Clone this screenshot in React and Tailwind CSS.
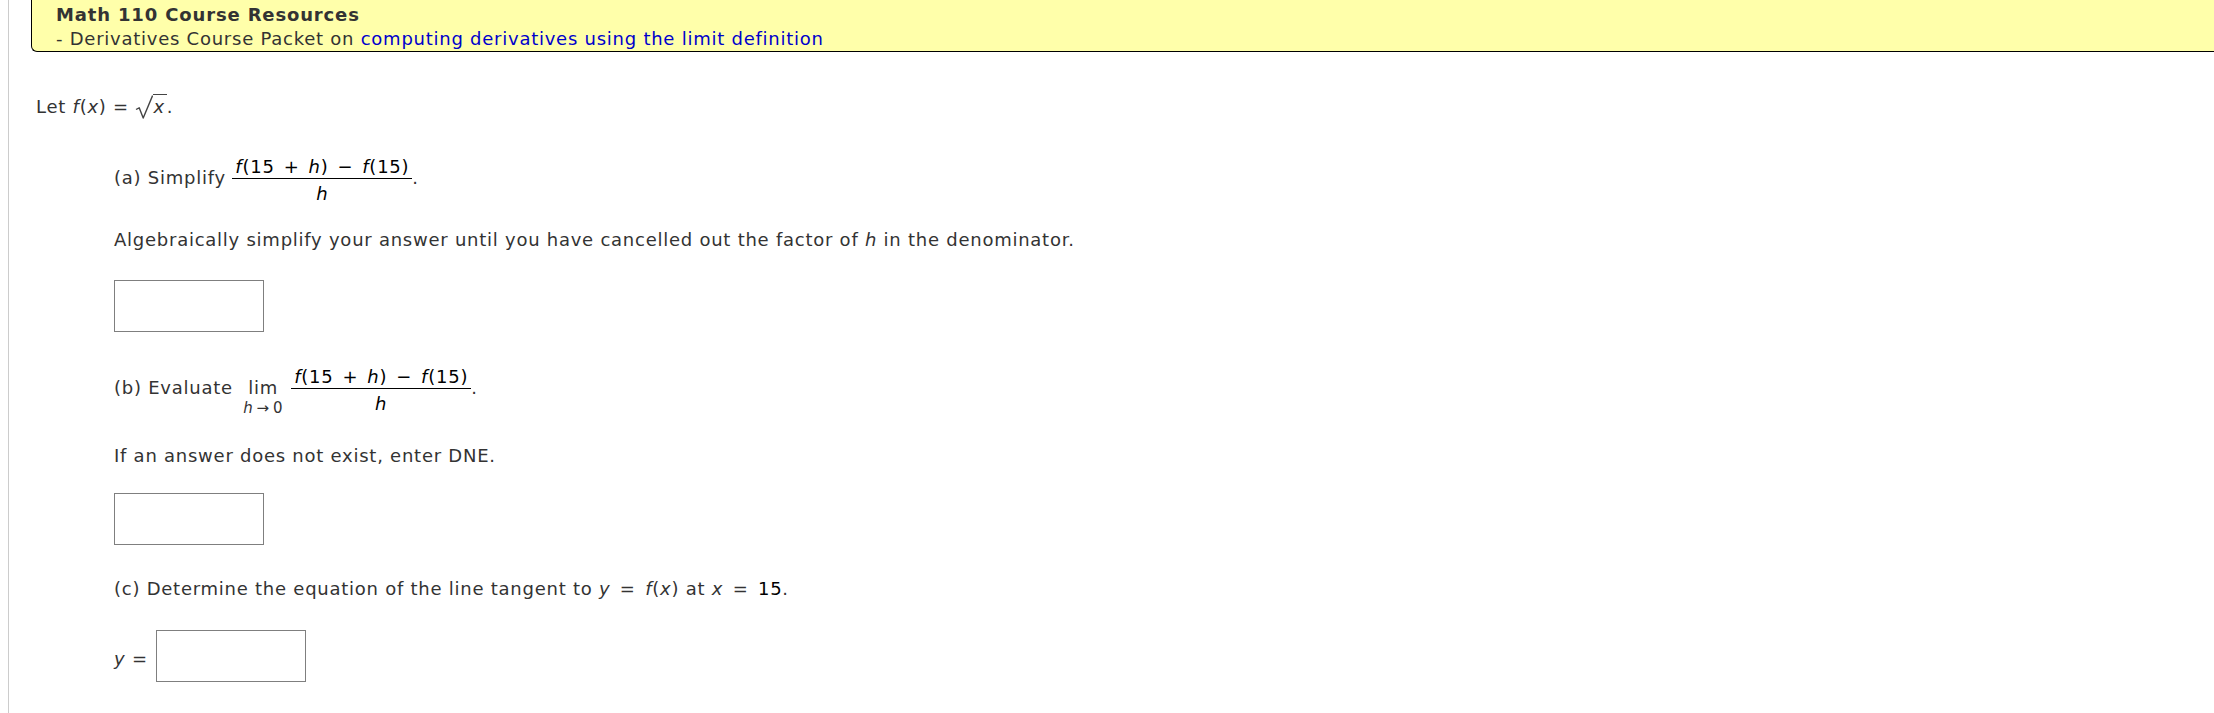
import React from "react";

function I({ children }) {
    return <i className="italic">{children}</i>;
}

function Op({ children }) {
    return <span className="mx-[9px]">{children}</span>;
}

function Frac() {
    return (
        <span className="inline-flex flex-col items-stretch align-middle text-black">
            <span className="px-[3px] pt-[4px] pb-[1px] leading-[20px] text-center whitespace-nowrap"><I>f</I>(15<Op>+</Op><I>h</I>)<Op>−</Op><I>f</I>(15)</span>
            <span className="border-t border-black pt-[5px] leading-[20px] text-center"><I>h</I></span>
        </span>
    );
}

function Lim() {
    return (
        <span className="inline-flex flex-col items-center align-baseline ml-[4px] mr-[8px]">
            <span className="leading-[24px]">lim</span>
            <span className="text-[15px] leading-[17px] whitespace-nowrap"><I>h</I><span className="mx-[3px]">→</span>0</span>
        </span>
    );
}

function Sqrt() {
    return (
        <>
            <svg className="inline align-[-6px]" width="18" height="24" viewBox="0 0 18 24">
                <path d="M1 14.5 L4.2 12.8 L8.2 23 L17.6 0.6" fill="none" stroke="#444" strokeWidth="1.4" strokeLinejoin="round" />
            </svg>
            <span className="inline-block border-t border-[#444] pt-[2px] leading-[19px] pr-[2px]"><I>x</I></span>
        </>
    );
}

function AnswerBox() {
    return <div className="w-[150px] h-[52px] border border-[#7f7f7f] bg-white" />;
}

export default function App() {
    return (
        <div className="min-h-screen bg-white text-[#333] text-[18px] tracking-[0.75px]" style={{ fontFamily: '"DejaVu Sans", Verdana, sans-serif' }}>
            <div className="ml-[8px] border-l border-[#cccccc] min-h-[713px]">
                <div className="ml-[22px] bg-[#ffffaa] border-l border-b border-black rounded-bl-[6px] pl-[24px] pt-[3px] leading-[24px]">
                    <div className="font-bold tracking-[0.85px]">Math 110 Course Resources</div>
                    <div>- Derivatives Course Packet on <a href="#" className="text-[#0000cc]">computing derivatives using the limit definition</a></div>
                </div>

                <div className="pl-[27px]">
                    <div className="mt-[42px] leading-[24px]">Let <I>f</I>(<I>x</I>) = <Sqrt />.</div>

                    <div className="ml-[78px]">
                        <div className="mt-[34px] leading-[24px]">(a) Simplify <Frac />.</div>
                        <div className="mt-[24px] leading-[24px]">Algebraically simplify your answer until you have cancelled out the factor of <I>h</I> in the denominator.</div>
                        <div className="mt-[28px]"><AnswerBox /></div>

                        <div className="mt-[31px] leading-[24px]">(b) Evaluate <Lim /><Frac />.</div>
                        <div className="mt-[27px] leading-[24px]">If an answer does not exist, enter DNE.</div>
                        <div className="mt-[25px]"><AnswerBox /></div>

                        <div className="mt-[32px] leading-[24px]">(c) Determine the equation of the line tangent to <I>y</I><span className="mx-[3px]"> = </span><I>f</I>(<I>x</I>) at <I>x</I><span className="mx-[3px]"> = </span><span className="text-black">15</span>.</div>
                        <div className="mt-[29px] flex items-center gap-[8px]">
                            <span className="leading-[24px] pt-[6px]"><I>y</I> =</span>
                            <AnswerBox />
                        </div>
                    </div>
                </div>
            </div>
        </div>
    );
}
